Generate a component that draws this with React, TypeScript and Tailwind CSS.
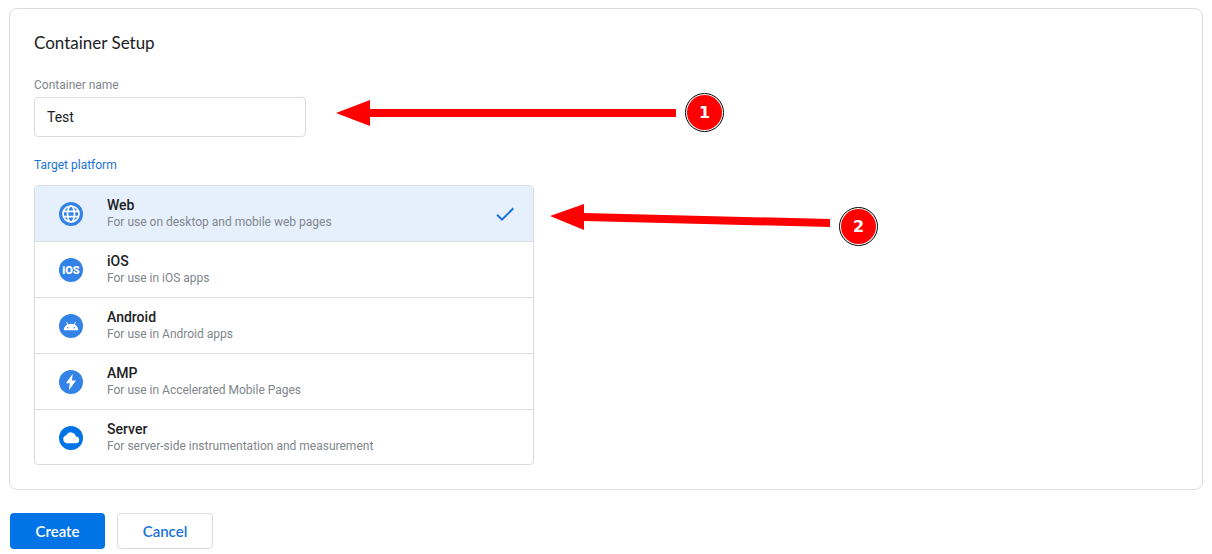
import { useState, type FormEvent, type ReactNode } from 'react'

interface Platform {
  id: string
  name: string
  description: string
  icon: ReactNode
}

const PLATFORMS: Platform[] = [
  {
    id: 'web',
    name: 'Web',
    description: 'For use on desktop and mobile web pages',
    icon: (
      <PlatformIcon color="#3382e8">
        <g fill="none" stroke="#fff" strokeWidth="1.7">
          <circle cx="12" cy="12" r="8" />
          <ellipse cx="12" cy="12" rx="3.5" ry="8" />
          <path d="M4.6 9.3h14.8M4.6 14.7h14.8" />
        </g>
      </PlatformIcon>
    ),
  },
  {
    id: 'ios',
    name: 'iOS',
    description: 'For use in iOS apps',
    icon: (
      <PlatformIcon color="#3382e8">
        <text
          x="12"
          y="16"
          textAnchor="middle"
          fill="#fff"
          className="font-[Roboto,sans-serif] text-[11px] font-black"
        >
          iOS
        </text>
      </PlatformIcon>
    ),
  },
  {
    id: 'android',
    name: 'Android',
    description: 'For use in Android apps',
    icon: (
      <PlatformIcon color="#3382e8">
        <path
          d="M4.7 16.2c.2-2.6 1.6-4.6 3.6-5.7L7 8.2l.7-.4 1.4 2.4a8 8 0 0 1 5.8 0l1.4-2.4.7.4-1.3 2.3c2 1.1 3.4 3.1 3.6 5.7z"
          fill="#fff"
        />
        <circle cx="8.7" cy="13.7" r=".75" fill="#3382e8" />
        <circle cx="15.3" cy="13.7" r=".75" fill="#3382e8" />
      </PlatformIcon>
    ),
  },
  {
    id: 'amp',
    name: 'AMP',
    description: 'For use in Accelerated Mobile Pages',
    icon: (
      <PlatformIcon color="#3382e8">
        <path d="M13.8 3.8 6.9 13.3h3.8L9.9 20.3l7.1-9.9h-4.1z" fill="#fff" />
      </PlatformIcon>
    ),
  },
  {
    id: 'server',
    name: 'Server',
    description: 'For server-side instrumentation and measurement',
    icon: (
      <PlatformIcon color="#0073e6">
        <path
          d="M16.9 10.4A5.2 5.2 0 0 0 7.2 9.2 4.1 4.1 0 0 0 7.9 17.2h8.8a3.4 3.4 0 0 0 .2-6.8z"
          fill="#fff"
        />
      </PlatformIcon>
    ),
  },
]

function PlatformIcon({ color, children }: { color: string; children: ReactNode }) {
  return (
    <svg width="24" height="24" viewBox="0 0 24 24" className="shrink-0" aria-hidden="true">
      <circle cx="12" cy="12" r="12" fill={color} />
      {children}
    </svg>
  )
}

function PlatformOption({
  platform,
  checked,
  onSelect,
}: {
  platform: Platform
  checked: boolean
  onSelect: () => void
}) {
  return (
    <label className="relative flex cursor-pointer items-center gap-6 border-b border-[#dadce0] pt-[11px] pr-4 pb-2.5 pl-6 last:border-b-0 last:pb-[9px] has-checked:bg-[#e6f0fc]">
      <input
        type="radio"
        name="platform"
        value={platform.id}
        checked={checked}
        onChange={onSelect}
        className="sr-only"
      />
      {platform.icon}
      <span className="flex grow flex-col">
        <span className="text-sm leading-4 font-medium text-[#202124]">{platform.name}</span>
        <span className="text-xs leading-[18px] text-[#80868b]">{platform.description}</span>
      </span>
      {checked && (
        <svg width="24" height="24" viewBox="0 0 24 24" fill="#1a73d9" aria-hidden="true">
          <path d="M9 16.17 4.83 12l-1.42 1.41L9 19 21 7l-1.41-1.41z" />
        </svg>
      )}
    </label>
  )
}

function StepBadge({ step }: { step: number }) {
  return (
    <span className="flex size-[39px] items-center justify-center rounded-full border border-black bg-white p-px">
      <span className="flex size-full items-center justify-center rounded-full bg-[#fe0000] font-['DejaVu_Sans',sans-serif] text-base leading-5 font-bold text-white">
        {step}
      </span>
    </span>
  )
}

export default function App() {
  const [name, setName] = useState('Test')
  const [selected, setSelected] = useState('web')

  const handleSubmit = (e: FormEvent) => e.preventDefault()

  return (
    <form
      onSubmit={handleSubmit}
      className="relative bg-white px-[9px] pt-2 font-[Roboto,sans-serif] text-[#202124]"
    >
      <section className="rounded-lg border border-[#dadce0] px-6 pt-[22px] pb-6">
        <h1 className="font-[Lato,sans-serif] text-[17px] leading-6">Container Setup</h1>

        <div className="mt-[22px] flex flex-col gap-1">
          <label htmlFor="container-name" className="text-xs leading-4 text-[#80868b]">
            Container name
          </label>
          <input
            id="container-name"
            type="text"
            value={name}
            onChange={(e) => setName(e.target.value)}
            className="h-10 w-full max-w-[272px] rounded border border-[#dadce0] px-3 text-sm outline-none focus:border-[#1a73e8]"
          />
        </div>

        <fieldset className="mt-5">
          <legend className="text-xs leading-4 text-[#1a73d9]">Target platform</legend>
          <div className="mt-3 max-w-[500px] overflow-hidden rounded border border-[#dadce0]">
            {PLATFORMS.map((p) => (
              <PlatformOption
                key={p.id}
                platform={p}
                checked={selected === p.id}
                onSelect={() => setSelected(p.id)}
              />
            ))}
          </div>
        </fieldset>
      </section>

      <div className="mt-[23px] flex gap-3 px-px font-[Lato,sans-serif] text-[15px] font-semibold">
        <button type="submit" className="h-9 min-w-[95px] rounded bg-[#0073e6] px-6 text-white">
          Create
        </button>
        <button
          type="button"
          className="h-9 min-w-24 rounded border border-[#dadce0] bg-white px-6 text-[#1a73d9]"
        >
          Cancel
        </button>
      </div>

      {/* Walkthrough callouts */}
      <div className="pointer-events-none absolute top-[93px] left-[336px] flex items-center gap-[9px]">
        <svg width="340" height="27" viewBox="0 0 340 27" fill="#fe0000" aria-hidden="true">
          <path d="M0 14 34 1v9h306v8H34v9z" />
        </svg>
        <StepBadge step={1} />
      </div>
      <div className="pointer-events-none absolute top-[203px] left-[550px] flex items-end gap-[9px]">
        <svg width="280" height="43" viewBox="0 0 280 43" fill="#fe0000" aria-hidden="true">
          <path d="M0 13 34 1v9l246 6v8L34 18v9z" />
        </svg>
        <StepBadge step={2} />
      </div>
    </form>
  )
}
